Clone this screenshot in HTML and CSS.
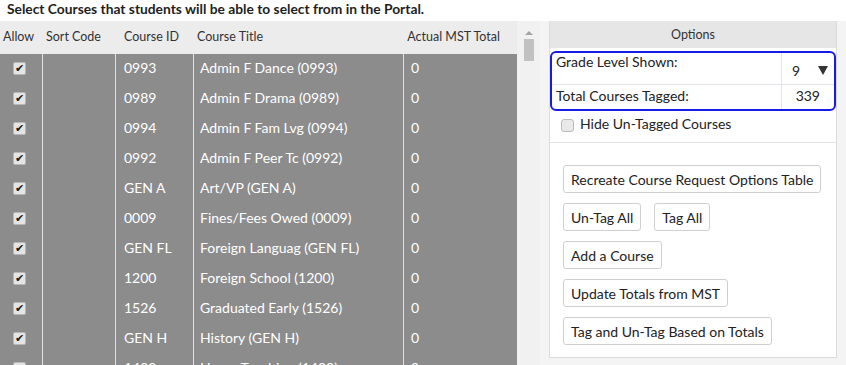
FILE: index.html
```html
<!DOCTYPE html>
<html>
<head>
<meta charset="utf-8">
<link rel="stylesheet" href="styles.css">
</head>
<body>
<div class="title">Select Courses that students will be able to select from in the Portal.</div>
<div class="main">
  <div class="grid-wrap">
    <div class="grid">
      <div class="row head">
        <div class="c c-allow">Allow</div>
        <div class="c c-sort">Sort Code</div>
        <div class="c c-id">Course ID</div>
        <div class="c c-title">Course Title</div>
        <div class="c c-mst">Actual MST Total</div>
      </div>
      <div class="row"><div class="c c-allow"><span class="cb">✔</span></div><div class="c c-sort"></div><div class="c c-id">0993</div><div class="c c-title">Admin F Dance (0993)</div><div class="c c-mst">0</div></div>
      <div class="row"><div class="c c-allow"><span class="cb">✔</span></div><div class="c c-sort"></div><div class="c c-id">0989</div><div class="c c-title">Admin F Drama (0989)</div><div class="c c-mst">0</div></div>
      <div class="row"><div class="c c-allow"><span class="cb">✔</span></div><div class="c c-sort"></div><div class="c c-id">0994</div><div class="c c-title">Admin F Fam Lvg (0994)</div><div class="c c-mst">0</div></div>
      <div class="row"><div class="c c-allow"><span class="cb">✔</span></div><div class="c c-sort"></div><div class="c c-id">0992</div><div class="c c-title">Admin F Peer Tc (0992)</div><div class="c c-mst">0</div></div>
      <div class="row"><div class="c c-allow"><span class="cb">✔</span></div><div class="c c-sort"></div><div class="c c-id">GEN A</div><div class="c c-title">Art/VP (GEN A)</div><div class="c c-mst">0</div></div>
      <div class="row"><div class="c c-allow"><span class="cb">✔</span></div><div class="c c-sort"></div><div class="c c-id">0009</div><div class="c c-title">Fines/Fees Owed (0009)</div><div class="c c-mst">0</div></div>
      <div class="row"><div class="c c-allow"><span class="cb">✔</span></div><div class="c c-sort"></div><div class="c c-id">GEN FL</div><div class="c c-title">Foreign Languag (GEN FL)</div><div class="c c-mst">0</div></div>
      <div class="row"><div class="c c-allow"><span class="cb">✔</span></div><div class="c c-sort"></div><div class="c c-id">1200</div><div class="c c-title">Foreign School (1200)</div><div class="c c-mst">0</div></div>
      <div class="row"><div class="c c-allow"><span class="cb">✔</span></div><div class="c c-sort"></div><div class="c c-id">1526</div><div class="c c-title">Graduated Early (1526)</div><div class="c c-mst">0</div></div>
      <div class="row"><div class="c c-allow"><span class="cb">✔</span></div><div class="c c-sort"></div><div class="c c-id">GEN H</div><div class="c c-title">History (GEN H)</div><div class="c c-mst">0</div></div>
      <div class="row"><div class="c c-allow"><span class="cb">✔</span></div><div class="c c-sort"></div><div class="c c-id">1490</div><div class="c c-title">Home Teaching (1490)</div><div class="c c-mst">0</div></div>
    </div>
    <div class="scrollbar">
      <div class="arrow"></div>
      <div class="thumb"></div>
    </div>
  </div>
  <div class="side">
    <div class="panel">
      <div class="panel-head">Options</div>
      <div class="info">
        <div class="info-row r1">
          <div class="lbl">Grade Level Shown:</div>
          <div class="val sel"><span>9</span><span class="tri"></span></div>
        </div>
        <div class="info-row r2">
          <div class="lbl">Total Courses Tagged:</div>
          <div class="val num">339</div>
        </div>
      </div>
      <label class="hide"><span class="box"></span>Hide Un-Tagged Courses</label>
      <div class="buttons">
        <div class="brow"><button class="btn">Recreate Course Request Options Table</button></div>
        <div class="brow"><button class="btn">Un-Tag All</button><button class="btn">Tag All</button></div>
        <div class="brow"><button class="btn">Add a Course</button></div>
        <div class="brow"><button class="btn">Update Totals from MST</button></div>
        <div class="brow"><button class="btn">Tag and Un-Tag Based on Totals</button></div>
      </div>
    </div>
  </div>
</div>
</body>
</html>
```
FILE: styles.css
```css
html, body {
  margin: 0;
  padding: 0;
  background: #ffffff;
  font-family: Lato, "Noto Sans", sans-serif;
  color: #222;
  overflow: hidden;
}
.title {
  height: 21px;
  line-height: 18px;
  padding-left: 7px;
  font-size: 13.8px;
  font-weight: 700;
  color: #1e1e1e;
  white-space: nowrap;
}
.main {
  display: flex;
  height: 344px;
  overflow: hidden;
}
.grid-wrap {
  display: flex;
  width: 540px;
  flex: none;
  overflow: hidden;
}
.grid {
  width: 517px;
  flex: none;
}
.row {
  display: flex;
  height: 30px;
  background: #8c8c8c;
  color: #fff;
  font-size: 14px;
}
.row.head {
  height: 33px;
  background: #ececec;
  color: #333;
  font-size: 12.5px;
}
.c {
  display: flex;
  align-items: center;
  box-sizing: border-box;
  white-space: nowrap;
  border-left: 1px solid #e2e2e2;
  padding-bottom: 4px;
}
.row.head .c { border-left: none; padding-bottom: 2px; }
.c-allow { width: 42px; justify-content: center; border-left: none; }
.row .c-allow { padding-bottom: 2px; }
.c-sort { width: 73px; padding-left: 4px; }
.c-id { width: 78px; padding-left: 8px; }
.c-title { width: 210px; padding-left: 6px; }
.c-mst { width: 114px; padding-left: 7px; }
.row.head .c-allow { justify-content: flex-start; padding-left: 3px; }
.row.head .c-id { padding-left: 9px; }
.row.head .c-title { padding-left: 4px; }
.row.head .c-mst { justify-content: flex-end; padding-right: 17px; }
.cb {
  display: inline-flex;
  align-items: center;
  justify-content: center;
  width: 13px;
  height: 13px;
  margin-left: -3px;
  background: #e4e4e4;
  border: 1px solid #b8b8b8;
  border-radius: 2px;
  box-sizing: border-box;
  color: #1a1a1a;
  font-size: 11px;
  line-height: 1;
  font-family: "DejaVu Sans", sans-serif;
}
.scrollbar {
  width: 23px;
  flex: none;
  background: #f1f1f1;
  display: flex;
  flex-direction: column;
  align-items: center;
}
.arrow {
  margin-top: 10px;
  width: 0;
  height: 0;
  border-left: 4px solid transparent;
  border-right: 4px solid transparent;
  border-bottom: 4px solid #a3a3a3;
}
.thumb {
  margin-top: 4px;
  width: 10px;
  height: 22px;
  background: #c1c1c1;
}
.side {
  flex: 1;
  background: #f4f4f4;
  padding-left: 9px;
  padding-right: 9px;
}
.panel {
  background: #fff;
  border: 1px solid #dcdcdc;
  border-top: none;
  height: 337px;
  box-sizing: border-box;
}
.panel-head {
  height: 27px;
  line-height: 28px;
  background: #e6e6e6;
  text-align: center;
  font-size: 12.5px;
  color: #333;
}
.info {
  margin-top: 3px;
  border: 2px solid #1a1ae6;
  border-radius: 6px;
  font-size: 14px;
  color: #222;
}
.info-row {
  display: flex;
}
.info-row.r1 { height: 31px; border-bottom: 1px solid #e2e6ea; }
.info-row.r2 { height: 24px; }
.lbl {
  flex: 1;
  padding-left: 4px;
}
.r1 .lbl { padding-top: 0; line-height: 18px; }
.r2 .lbl { line-height: 22px; }
.val {
  width: 53px;
  border-left: 1px solid #e2e6ea;
  box-sizing: border-box;
}
.sel {
  display: flex;
  align-items: center;
  padding-left: 10px;
  padding-top: 4px;
  gap: 18px;
}
.tri {
  width: 0;
  height: 0;
  border-left: 5px solid transparent;
  border-right: 5px solid transparent;
  border-top: 9px solid #333;
}
.num {
  text-align: right;
  padding-right: 14px;
  line-height: 22px;
}
.hide {
  display: flex;
  align-items: center;
  height: 32px;
  padding-left: 11px;
  padding-bottom: 6px;
  box-sizing: border-box;
  font-size: 14px;
  color: #222;
  border-bottom: 1px solid #e2e2e2;
}
.box {
  width: 13px;
  height: 13px;
  box-sizing: border-box;
  border: 1px solid #bcbcbc;
  border-radius: 3px;
  background: #e9e9e9;
  margin-right: 6px;
  margin-top: 4px;
}
.buttons {
  padding: 22px 0 0 13px;
  display: flex;
  flex-direction: column;
  gap: 10px;
}
.brow {
  display: flex;
  gap: 13px;
}
.btn {
  font-family: Lato, "Noto Sans", sans-serif;
  font-size: 14px;
  color: #222;
  background: #fff;
  border: 1px solid #cfcfcf;
  border-radius: 3px;
  height: 28px;
  padding: 0 7px;
  cursor: pointer;
}
```
